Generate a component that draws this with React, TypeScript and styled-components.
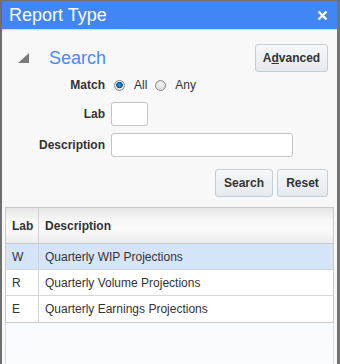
import styled, { createGlobalStyle } from 'styled-components';

const GlobalStyle = createGlobalStyle`
  html, body {
    margin: 0;
    padding: 0;
    background: #ffffff;
  }
  * {
    box-sizing: border-box;
  }
`;

const Window = styled.div`
  width: 340px;
  height: 364px;
  display: flex;
  flex-direction: column;
  overflow: hidden;
  background: #f8f8f8;
  border-top: 1px solid #6f6f6f;
  border-left: 2px solid #6f6f6f;
  border-right: 3px solid #737373;
  font-family: 'Liberation Sans', Arial, sans-serif;
  font-size: 12px;
  color: #333;
`;

const TitleBar = styled.div`
  height: 29px;
  flex: none;
  display: flex;
  align-items: center;
  justify-content: space-between;
  padding: 0 9px 0 7px;
  background: #4285f4;
  border-bottom: 1px solid #dadada;
`;

const Title = styled.h1`
  margin: 0;
  font-size: 18px;
  font-weight: normal;
  color: #fff;
`;

const CloseButton = styled.button`
  display: flex;
  padding: 0;
  border: none;
  background: none;
  cursor: pointer;
`;

const Panel = styled.section`
  padding: 14px 9px 0 14px;
`;

const PanelHeader = styled.div`
  display: flex;
  align-items: center;
  justify-content: space-between;
`;

const HeaderLeft = styled.div`
  display: flex;
  align-items: center;
  gap: 18px;
`;

const PanelTitle = styled.h2`
  margin: 0;
  font-size: 18px;
  font-weight: normal;
  color: #4a8af4;
`;

const Button = styled.button<{ $width: number }>`
  width: ${({ $width }) => $width}px;
  height: 28px;
  padding: 0;
  border: 1px solid #c5cdd6;
  border-radius: 3px;
  background: linear-gradient(#f6f8fa, #e5e9ee);
  font-family: inherit;
  font-size: 12px;
  font-weight: bold;
  color: #333;
  cursor: pointer;

  u {
    text-decoration: underline;
  }
`;

const Form = styled.div`
  display: grid;
  grid-template-columns: 89px auto;
  column-gap: 6px;
  row-gap: 7px;
  margin-top: 3px;
`;

const Label = styled.label`
  display: flex;
  align-items: center;
  justify-content: flex-end;
  font-weight: bold;
  color: #333;
`;

const RadioGroup = styled.div`
  display: flex;
  align-items: center;
  height: 20px;
`;

const RadioOption = styled.span`
  display: flex;
  align-items: center;
  gap: 9px;
  margin-right: 5px;
  margin-left: 3px;
`;

const RadioDot = styled.span<{ $checked?: boolean }>`
  width: 11px;
  height: 11px;
  border-radius: 50%;
  border: 1px solid #8c8c8c;
  background: ${({ $checked }) =>
    $checked
      ? 'radial-gradient(circle at 50% 45%, #4aa0e0 0, #0d5da3 2.5px, #0b4f8a 3px, #f2f2f2 3.5px, #d9d9d9 5px)'
      : 'radial-gradient(circle at 50% 40%, #f4f4f4 0, #dcdcdc 5px)'};
`;

const TextInput = styled.input<{ $width: number }>`
  width: ${({ $width }) => $width}px;
  height: 24px;
  border: 1px solid #c4c4c4;
  border-radius: 3px;
  background: #fff;
  padding: 0 4px;
  font-family: inherit;
  font-size: 12px;
`;

const ButtonRow = styled.div`
  display: flex;
  justify-content: flex-end;
  gap: 4px;
  margin-top: 12px;
`;

const TableArea = styled.div`
  flex: 1;
  margin: 10px 3px 0 3px;
  border-left: 1px solid #d3dbe4;
  border-right: 1px solid #d3dbe4;
  background: linear-gradient(#f1f5fa, #fafcfe);
`;

const Table = styled.div`
  margin: 0 -1px;
  border: 1px solid #c8c8c8;
  background: #fff;
`;

const Row = styled.div<{ $head?: boolean; $selected?: boolean }>`
  display: grid;
  grid-template-columns: 33px 1fr;
  height: ${({ $head }) => ($head ? 36 : 26)}px;
  border-bottom: 1px solid ${({ $head }) => ($head ? '#c9c9c9' : '#d8d8d8')};
  background: ${({ $head, $selected }) =>
    $head
      ? 'linear-gradient(#e6e6e6, #f7f7f7 35%, #fbfbfb 60%, #ececec)'
      : $selected
      ? '#d5e4f8'
      : '#fff'};
  font-weight: ${({ $head }) => ($head ? 'bold' : 'normal')};

  &:last-child {
    border-bottom: none;
  }
`;

const Cell = styled.div`
  display: flex;
  align-items: center;
  padding-left: 6px;

  &:first-child {
    border-right: 1px solid #d2d2d2;
  }
`;

const rows = [
  { lab: 'W', description: 'Quarterly WIP Projections' },
  { lab: 'R', description: 'Quarterly Volume Projections' },
  { lab: 'E', description: 'Quarterly Earnings Projections' },
];

export default function App() {
  return (
    <>
      <GlobalStyle />
      <Window>
        <TitleBar>
          <Title>Report Type</Title>
          <CloseButton aria-label="Close">
            <svg width="11" height="11" viewBox="0 0 11 11">
              <path d="M1.5 1.5 L9.5 9.5 M9.5 1.5 L1.5 9.5" stroke="#fff" strokeWidth="2.4" />
            </svg>
          </CloseButton>
        </TitleBar>
        <Panel>
          <PanelHeader>
            <HeaderLeft>
              <svg width="13" height="10" viewBox="0 0 13 10" style={{ marginLeft: 2 }}>
                <polygon points="0,10 11,10 11,0" fill="#7a7a7a" />
              </svg>
              <PanelTitle>Search</PanelTitle>
            </HeaderLeft>
            <Button $width={73}>
              A<u>d</u>vanced
            </Button>
          </PanelHeader>
          <Form>
            <Label>Match</Label>
            <RadioGroup>
              <RadioOption>
                <RadioDot $checked />
                All
              </RadioOption>
              <RadioOption>
                <RadioDot />
                Any
              </RadioOption>
            </RadioGroup>
            <Label>Lab</Label>
            <div>
              <TextInput $width={37} />
            </div>
            <Label>Description</Label>
            <div>
              <TextInput $width={182} />
            </div>
          </Form>
          <ButtonRow>
            <Button $width={58}>Search</Button>
            <Button $width={51}>Reset</Button>
          </ButtonRow>
        </Panel>
        <TableArea>
          <Table>
            <Row $head>
              <Cell>Lab</Cell>
              <Cell>Description</Cell>
            </Row>
            {rows.map((r, i) => (
              <Row key={r.lab} $selected={i === 0}>
                <Cell>{r.lab}</Cell>
                <Cell>{r.description}</Cell>
              </Row>
            ))}
          </Table>
        </TableArea>
      </Window>
    </>
  );
}
